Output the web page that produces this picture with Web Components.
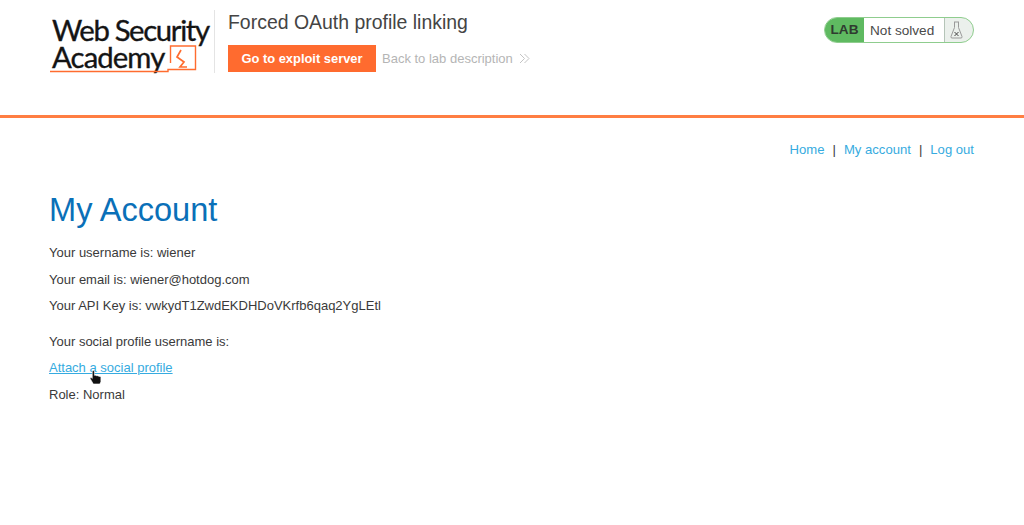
<!DOCTYPE html>
<html lang="en"><head><meta charset="utf-8"><title>My Account</title>
<style>
html,body{margin:0;padding:0;background:#fff}
body{font-family:"Liberation Sans",Arial,sans-serif;color:#3a3a3a;width:1024px;height:525px;overflow:hidden}
</style></head><body>
<lab-header>
  <academy-logo slot="logo"></academy-logo>
  <span slot="title">Forced OAuth profile linking</span>
  <a slot="button" href="#">Go to exploit server</a>
  <span slot="back">Back to lab description</span>
  <lab-status slot="status"></lab-status>
</lab-header>
<top-nav></top-nav>
<account-panel></account-panel>
<script>
function def(name,html){
  customElements.define(name,class extends HTMLElement{
    constructor(){super();this.attachShadow({mode:"open"}).innerHTML=html;}
  });
}
def("academy-logo",`<style>
:host{display:block;width:162px;height:59px;font-family:Lato,"Liberation Sans",sans-serif;color:#141414}
.w{display:flex;flex-direction:column;position:relative;height:59px;padding-left:1px;box-sizing:border-box}
.l{font-size:29.3px;line-height:27px;letter-spacing:-1.35px;white-space:nowrap;-webkit-text-stroke:.35px #141414}
.a{letter-spacing:-.9px}
svg{display:block;position:absolute;left:-3px;top:25px}
</style><div class="w"><div class="l">Web Security</div><div class="l a">Academy</div>
<svg width="150" height="32" viewBox="0 0 150 32" fill="none" stroke="#ff6c2f" stroke-width="1.4"><path d="M2 30.500H120V28.500H147.500V5H122.500V22"/><path d="M133 9l-4 7 7 5-4 5h7" stroke-width="1.7"/></svg>
</div>`);
def("lab-status",`<style>
:host{display:block;font:13.6px/1 "Liberation Sans",sans-serif}
.p{display:flex;height:26px;width:150px;box-sizing:border-box;border:1px solid #8fcd8e;border-radius:13px;overflow:hidden;background:#ebf0ec}
.a{width:39px;background:#5fba61;color:#2f3b30;font-weight:700;display:flex;align-items:center;justify-content:center}
.b{width:80px;background:#fff;color:#4a4a4a;display:flex;align-items:center;padding:1px 0 0 6px;box-sizing:border-box;font-size:13.6px}
.c{flex:1;border-left:1px solid #b5c4b8;display:flex;align-items:center;justify-content:center;padding-right:6px}
</style><div class="p"><div class="a">LAB</div><div class="b">Not solved</div><div class="c">
<svg width="13" height="18" viewBox="0 0 13 18" fill="none" stroke="#9a9a9a" stroke-width="1"><path d="M4 1h5M4.500 1v5.500L1 15.500q-.4 1.500 1 1.500h9q1.400 0 1-1.500L8.500 6.500V1"/><path d="M4.500 11l4 4M8.500 11l-4 4" stroke="#444"/></svg></div></div>`);
def("lab-header",`<style>
:host{display:flex;box-sizing:border-box;height:118px;border-bottom:3px solid #ff7e42;padding:10px 50px 0 51px;font-family:"Liberation Sans",sans-serif;background:#fff}
.logo{box-sizing:border-box;padding-top:6px;border-right:1px solid #e4e4e4;width:164px;margin-right:13px;height:63px}
.mid{flex:1;display:flex;flex-direction:column}
.t{font-size:19.45px;line-height:24px;color:#444}
.row{display:flex;align-items:center;margin-top:11px;gap:6px}
::slotted(a){background:#ff6b2f;color:#fff;font-size:12.9px;font-weight:700;text-decoration:none;display:block;height:27px;line-height:27px;width:148px;text-align:center}
.back{font-size:13px;color:#b5b5b5;display:flex;align-items:center;gap:6px}
.s{padding-top:7px}
</style>
<div class="logo"><slot name="logo"></slot></div>
<div class="mid"><div class="t"><slot name="title"></slot></div>
<div class="row"><slot name="button"></slot><div class="back"><slot name="back"></slot>
<svg width="11" height="11" viewBox="0 0 11 11" fill="none" stroke="#c4c4c4"><path d="M1 1l4.500 4.500L1 10M5.500 1L10 5.500 5.500 10"/></svg></div></div></div>
<div class="s"><slot name="status"></slot></div>`);
def("top-nav",`<style>
:host{display:flex;justify-content:flex-end;padding:24px 50px 0 0;height:73px;box-sizing:border-box;font:13.1px/15px "Liberation Sans",sans-serif;color:#3a3a3a}
a{color:#36abe0;text-decoration:none}
i{font-style:normal;margin:0 8px}
</style><a href="#">Home</a><i>|</i><a href="#">My account</a><i>|</i><a href="#">Log out</a>`);
def("account-panel",`<style>
:host{display:block;padding:0 49px;font:13px/15px "Liberation Sans",sans-serif;color:#3a3a3a}
h1{font-size:32.6px;line-height:38px;font-weight:400;color:#0a70b8;margin:0 0 16px}
p{margin:0 0 11.5px}
a{color:#36abe0}
.gap{margin-top:21px}
.pos{position:relative;margin-top:-.5px}
.cur{position:absolute;left:40px;top:10px}
</style><h1>My Account</h1>
<p>Your username is: wiener</p><p>Your email is: wiener@hotdog.com</p><p>Your API Key is: vwkydT1ZwdEKDHDoVKrfb6qaq2YgLEtl</p>
<p class="gap">Your social profile username is:</p>
<p class="pos"><a href="#">Attach a social profile</a><svg class="cur" width="13" height="15" viewBox="0 0 12 14"><path d="M3 1q1-1 2 0v4h1q1 0 1 .5 1-.5 2 .3 1.500 0 2 1V11l-1 2H4L1 8q0-1 1-1l1 1z" fill="#111" stroke="#fff" stroke-width=".5"/></svg></p>
<p>Role: Normal</p>`);
</script></body></html>
